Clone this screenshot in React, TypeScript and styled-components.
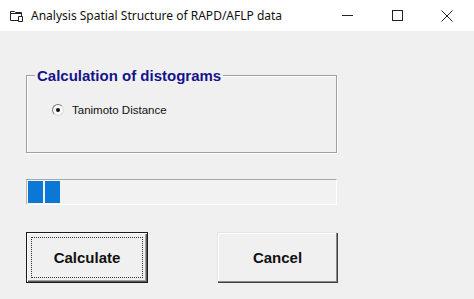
import React from "react";
import styled, { createGlobalStyle } from "styled-components";

const Global = createGlobalStyle`
  html, body { margin: 0; padding: 0; background: #f0f0f0; }
  #root { width: 474px; height: 299px; }
`;

const Window = styled.div`
  width: 474px;
  height: 299px;
  display: flex;
  flex-direction: column;
  background: #f0f0f0;
  overflow: hidden;
`;

const TitleBar = styled.div`
  height: 31px;
  flex: none;
  background: #ffffff;
  display: flex;
  align-items: center;
  padding-left: 10px;
  box-sizing: border-box;
`;

const TitleIcon = styled.svg`
  width: 13px;
  height: 12px;
  flex: none;
  margin-right: 8px;
  margin-top: 1px;
`;

const TitleText = styled.div`
  font-family: "Segoe UI", "Noto Sans", "Open Sans", sans-serif;
  font-size: 12px;
  color: #111;
  flex: 1;
  white-space: nowrap;
`;

const Controls = styled.div`
  display: flex;
  height: 100%;
  margin-right: 2px;
`;

const Ctrl = styled.div`
  width: 50px;
  height: 100%;
  display: flex;
  align-items: center;
  justify-content: center;
`;

const Body = styled.div`
  flex: 1;
  display: flex;
  flex-direction: column;
  padding: 36px 0 0 26px;
`;

const Group = styled.fieldset`
  width: 311px;
  height: 86px;
  box-sizing: border-box;
  margin: 0;
  padding: 0;
  border: 1px solid #a0a0a0;
  box-shadow: inset 1px 1px 0 #ffffff, 1px 1px 0 #ffffff;
  min-inline-size: 0;
`;

const Legend = styled.legend`
  margin-left: 8px;
  padding: 0 2px;
  font-family: "Liberation Sans", Arial, sans-serif;
  font-weight: bold;
  font-size: 15px;
  line-height: 17px;
  color: #14148a;
`;

const RadioRow = styled.label`
  display: flex;
  align-items: center;
  margin: 20px 0 0 25px;
  font-family: "Liberation Sans", Arial, sans-serif;
  font-size: 11.5px;
  color: #111;
`;

const RadioDot = styled.span`
  width: 12px;
  height: 12px;
  box-sizing: border-box;
  border-radius: 50%;
  border: 1px solid;
  border-color: #7a7a7a #dcdcdc #dcdcdc #7a7a7a;
  background: #f8f8f8;
  display: flex;
  align-items: center;
  justify-content: center;
  margin-right: 8px;
  &::after {
    content: "";
    width: 4px;
    height: 4px;
    border-radius: 50%;
    background: #111;
  }
`;

const Progress = styled.div`
  margin-top: 26px;
  width: 311px;
  height: 26px;
  box-sizing: border-box;
  border: 1px solid;
  border-color: #a8a8a8 #ffffff #ffffff #b8b8b8;
  background: #f2f2f2;
  padding: 1px;
  display: flex;
  gap: 2px;
`;

const Block = styled.div`
  width: 15px;
  height: 100%;
  background: #0a78d4;
`;

const Buttons = styled.div`
  margin-top: 27px;
  display: flex;
  gap: 69px;
`;

const Button = styled.button<{ $default?: boolean }>`
  width: ${(p) => (p.$default ? "122px" : "121px")};
  height: 51px;
  box-sizing: border-box;
  margin: 0;
  padding: 0;
  background: #f0f0f0;
  font-family: "Liberation Sans", Arial, sans-serif;
  font-weight: bold;
  font-size: 15px;
  color: #111;
  position: relative;
  border: ${(p) => (p.$default ? "1px solid #1a1a1a" : "none")};
  box-shadow: ${(p) =>
    p.$default
      ? "inset 1px 1px 0 #ffffff, inset -1px -1px 0 #5a5a5a, inset -2px -2px 0 #a0a0a0"
      : "inset 1px 1px 0 #e6e6e6, inset -1px -1px 0 #404040, inset -2px -2px 0 #8a8a8a, inset 2px 2px 0 #ffffff"};
`;

const Focus = styled.span`
  position: absolute;
  inset: 4px;
  border: 1px dotted #333;
  pointer-events: none;
`;

export default function App() {
  return (
    <>
      <Global />
      <Window>
        <TitleBar>
          <TitleIcon viewBox="0 0 13 12">
            <path d="M0.5 1.5 H4.5 L5.5 2.5 H11.5 V10.5 H0.5 Z" fill="none" stroke="#222" strokeWidth="1" />
            <path d="M0.5 3.5 H11.5" stroke="#222" strokeWidth="1" />
            <path d="M8.5 6.5 H12.5 V11.5 H8.5 Z" fill="#fff" stroke="#222" strokeWidth="1" />
          </TitleIcon>
          <TitleText>Analysis Spatial Structure of RAPD/AFLP data</TitleText>
          <Controls>
            <Ctrl>
              <svg width="11" height="11" viewBox="0 0 11 11">
                <path d="M0 5.5 H11" stroke="#222" strokeWidth="1" />
              </svg>
            </Ctrl>
            <Ctrl>
              <svg width="11" height="11" viewBox="0 0 11 11">
                <rect x="0.5" y="0.5" width="10" height="10" fill="none" stroke="#222" strokeWidth="1" />
              </svg>
            </Ctrl>
            <Ctrl>
              <svg width="12" height="12" viewBox="0 0 12 12">
                <path d="M0.5 0.5 L11.5 11.5 M11.5 0.5 L0.5 11.5" stroke="#222" strokeWidth="1" />
              </svg>
            </Ctrl>
          </Controls>
        </TitleBar>
        <Body>
          <Group>
            <Legend>Calculation of distograms</Legend>
            <RadioRow>
              <RadioDot />
              Tanimoto Distance
            </RadioRow>
          </Group>
          <Progress>
            <Block />
            <Block />
          </Progress>
          <Buttons>
            <Button $default>
              Calculate
              <Focus />
            </Button>
            <Button>Cancel</Button>
          </Buttons>
        </Body>
      </Window>
    </>
  );
}
